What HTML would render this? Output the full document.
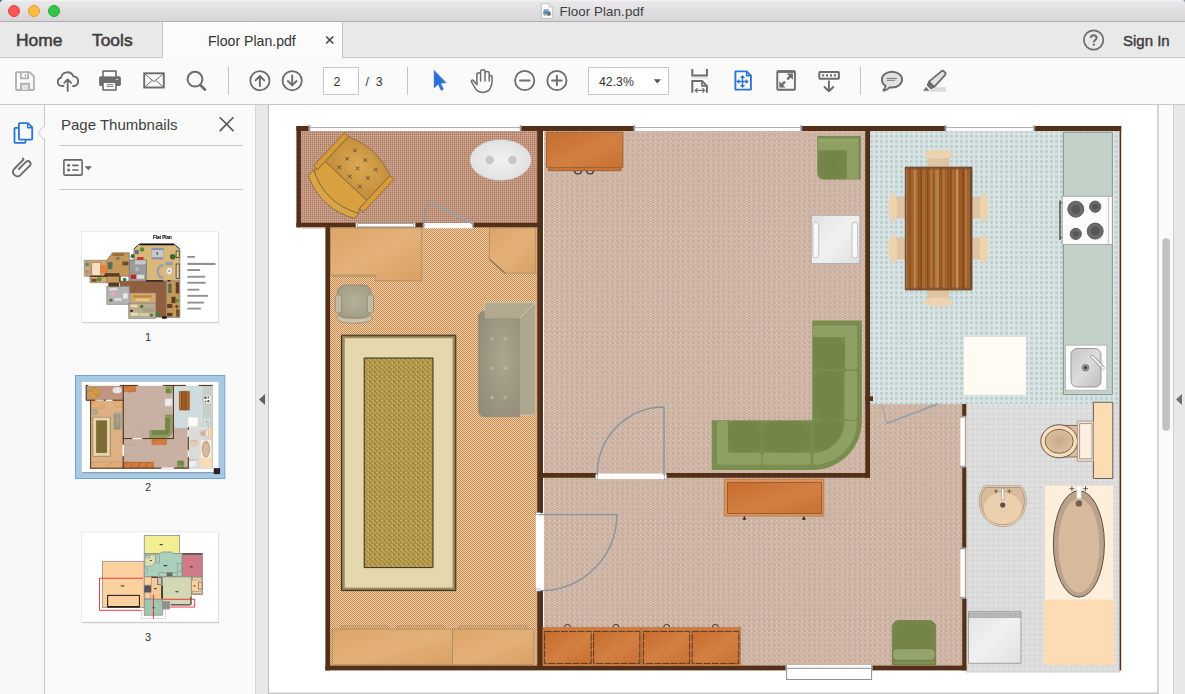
<!DOCTYPE html>
<html>
<head>
<meta charset="utf-8">
<title>Floor Plan.pdf</title>
<style>
html,body{margin:0;padding:0;}
body{width:1185px;height:694px;overflow:hidden;position:relative;background:#fff;font-family:"Liberation Sans",sans-serif;color:#3c3c3c;}
.abs{position:absolute;}
#titlebar{left:0;top:0;width:1185px;height:21px;background:linear-gradient(#f3f3f3 0,#e8e6e8 12%,#d7d5d7 100%);border-bottom:1px solid #b1afb1;}
.tl{position:absolute;top:5px;width:12px;height:12px;border-radius:50%;box-sizing:border-box;}
#title{left:559.5px;top:3.6px;font-size:13.3px;color:#404040;white-space:nowrap;letter-spacing:0.1px;}
#tabbar{left:0;top:22px;width:1185px;height:35px;background:#e9e9e9;border-bottom:1px solid #c6c6c6;}
#tab{left:162px;top:22px;width:179px;height:36px;background:#fbfbfb;border-left:1px solid #c6c6c6;border-right:1px solid #c6c6c6;}
.nav{font-size:17.4px;color:#3e3e3e;top:30px;white-space:nowrap;-webkit-text-stroke:0.55px #3e3e3e;}
#toolbar{left:0;top:58px;width:1185px;height:46px;background:#fafafa;border-bottom:1px solid #c9c9c9;}
.sep{width:1px;height:28px;top:67px;background:#c4c4c4;}
.box{background:#fff;border:1px solid #c8c8c8;box-sizing:border-box;top:67px;height:28px;}
#rail{left:0;top:105px;width:44px;height:589px;background:#f8f8f8;border-right:1px solid #c9c9c9;}
#panel{left:45px;top:105px;width:210px;height:589px;background:#fafafa;}
#strip{left:255px;top:105px;width:12px;height:589px;background:#e8e8e8;border-right:1px solid #bdbdbd;border-left:1px solid #d8d8d8;box-sizing:content-box;}
.hr{height:1px;background:#c9c9c9;left:60px;width:183px;}
.lbl{font-size:11px;color:#333;width:40px;text-align:center;}
</style>
</head>
<body>
<!-- CHROME -->
<div id="titlebar" class="abs"></div>
<div class="tl" style="left:8px;background:#fc5753;border:0.5px solid #df4744;"></div>
<div class="tl" style="left:28px;background:#fdbc40;border:0.5px solid #de9f34;"></div>
<div class="tl" style="left:48px;background:#33c748;border:0.5px solid #27aa35;"></div>
<div id="title" class="abs">Floor Plan.pdf</div>
<div id="tabbar" class="abs"></div>
<div id="tab" class="abs"></div>
<div class="abs nav" style="left:16px;">Home</div>
<div class="abs nav" style="left:92px;">Tools</div>
<div class="abs" style="left:208px;top:33px;font-size:14.1px;color:#333;white-space:nowrap;">Floor Plan.pdf</div>
<div class="abs" style="left:1123px;top:32px;font-size:15px;color:#3e3e3e;white-space:nowrap;-webkit-text-stroke:0.45px #3e3e3e;">Sign In</div>
<div id="toolbar" class="abs"></div>
<div class="abs sep" style="left:228px;"></div>
<div class="abs sep" style="left:407px;"></div>
<div class="abs sep" style="left:860px;"></div>
<div class="abs box" style="left:323px;width:36px;"></div>
<div class="abs" style="left:333.5px;top:74.5px;font-size:12.4px;color:#333;">2</div>
<div class="abs" style="left:365.5px;top:74.5px;font-size:12.4px;color:#333;white-space:pre;">/  3</div>
<div class="abs box" style="left:588px;width:81px;"></div>
<div class="abs" style="left:599px;top:74.5px;font-size:12.3px;color:#333;">42.3%</div>
<!-- LEFT -->
<div id="rail" class="abs"></div>
<div id="panel" class="abs"></div>
<div id="strip" class="abs"></div>
<div class="abs" style="left:61px;top:116px;font-size:15px;color:#404040;white-space:nowrap;">Page Thumbnails</div>
<div class="abs hr" style="top:145px;"></div>
<div class="abs hr" style="top:189px;"></div>
<div class="abs lbl" style="left:128px;top:331px;">1</div>
<div class="abs lbl" style="left:128px;top:481px;">2</div>
<div class="abs lbl" style="left:128px;top:631px;">3</div>
<!-- MAIN SVG (screen coordinates) -->
<svg class="abs" style="left:0;top:0;" width="1185" height="694" viewBox="0 0 1185 694">
<defs>
<pattern id="p1" width="2" height="2" patternUnits="userSpaceOnUse"><rect width="2" height="2" fill="#bf9079"/><rect width="1" height="1" fill="#b07e64"/><rect x="1" y="1" width="1" height="1" fill="#d2ae9c"/></pattern>
<pattern id="p2" width="2" height="2" patternUnits="userSpaceOnUse"><rect width="2" height="2" fill="#ebd0b2"/><rect width="1" height="1" fill="#cd8846"/><rect x="1" y="1" width="1" height="1" fill="#cf8c4a"/></pattern>
<pattern id="p3" width="5.050" height="5.050" x="604.500" y="252.400" patternUnits="userSpaceOnUse"><rect width="5.050" height="5.050" fill="#c4a694"/><g fill="#ebe0d8"><rect x="0" y="0" width="1" height="1"/><rect x="2" y="1" width="1" height="1"/><rect x="4" y="1" width="1" height="1"/><rect x="0" y="3" width="1" height="1"/></g><g fill="#d8c4b7"><rect x="1" y="2" width="1" height="1"/><rect x="3" y="2" width="1" height="1"/><rect x="1" y="4" width="1" height="1"/><rect x="3" y="4" width="1" height="1"/><rect x="1" y="0" width="1" height="1"/><rect x="4" y="3" width="1" height="1"/></g></pattern>
<pattern id="p4" width="5" height="5.040" x="1030" y="190.400" patternUnits="userSpaceOnUse"><rect width="5" height="5.040" fill="#dae3e5"/><rect x="0" y="0" width="3" height="3" fill="#bcd0ce"/></pattern>
<pattern id="p5" width="5.200" height="5.250" x="1024" y="403.900" patternUnits="userSpaceOnUse"><rect width="5.200" height="5.250" fill="#dfe0df"/><rect width="1" height="5.250" fill="#d3d4d3"/><rect width="5.200" height="1" y="4.250" fill="#d3d4d3"/></pattern>
<pattern id="prug" width="4.800" height="4.800" x="364.200" y="358" patternUnits="userSpaceOnUse"><rect width="4.800" height="4.800" fill="#d3b053"/><path d="M0 .6h2.400v1.200M2.400 3h2.400M.6 2.400v2.400M3 2.400v-1.200h1.200M1.800 3v1.200h-1.200" stroke="#84753f" stroke-width=".85" fill="none"/></pattern>
<linearGradient id="gshelf" x1="0" y1="0" x2="1" y2="1"><stop offset="0" stop-color="#dda468"/><stop offset=".5" stop-color="#e3b178"/><stop offset="1" stop-color="#daa064"/></linearGradient>
<linearGradient id="gor" x1="0" y1="0" x2="1" y2="1"><stop offset="0" stop-color="#c66c2e"/><stop offset=".55" stop-color="#d28042"/><stop offset="1" stop-color="#c77032"/></linearGradient>
<radialGradient id="garm" cx=".5" cy=".5" r=".6"><stop offset="0" stop-color="#dcaa52"/><stop offset="1" stop-color="#c48f3e"/></radialGradient>
<radialGradient id="ggray" cx=".5" cy=".5" r=".6"><stop offset="0" stop-color="#b5b099"/><stop offset="1" stop-color="#a09c86"/></radialGradient>
<radialGradient id="gsofa" cx=".6" cy=".45" r=".7"><stop offset="0" stop-color="#aca68c"/><stop offset="1" stop-color="#918c79"/></radialGradient>
<radialGradient id="ggreen" cx=".5" cy=".5" r=".75"><stop offset="0" stop-color="#728544"/><stop offset=".7" stop-color="#74874a"/><stop offset="1" stop-color="#7c8e50"/></radialGradient>
<linearGradient id="gwhite" x1="0" y1="0" x2="1" y2="1"><stop offset="0" stop-color="#e2e2e2"/><stop offset=".5" stop-color="#f1f1f1"/><stop offset="1" stop-color="#e0e0e0"/></linearGradient>
<linearGradient id="gwood" x1="0" y1="0" x2="1" y2="0">
<stop offset="0" stop-color="#8a4a1e"/><stop offset=".04" stop-color="#b87a3c"/><stop offset=".08" stop-color="#9a5a26"/><stop offset=".13" stop-color="#c48a48"/><stop offset=".18" stop-color="#a46430"/><stop offset=".23" stop-color="#8c4c20"/><stop offset=".28" stop-color="#b67838"/><stop offset=".33" stop-color="#9a5828"/><stop offset=".38" stop-color="#c08444"/><stop offset=".43" stop-color="#a4622c"/><stop offset=".48" stop-color="#caa058"/><stop offset=".52" stop-color="#9c5a28"/><stop offset=".57" stop-color="#b87a3c"/><stop offset=".62" stop-color="#8e4e22"/><stop offset=".67" stop-color="#b07034"/><stop offset=".72" stop-color="#9a5828"/><stop offset=".77" stop-color="#c48c4a"/><stop offset=".82" stop-color="#a05e2a"/><stop offset=".87" stop-color="#8a4a1e"/><stop offset=".92" stop-color="#b47636"/><stop offset=".96" stop-color="#96562a"/><stop offset="1" stop-color="#7e4218"/></linearGradient>
<radialGradient id="gtub" cx=".5" cy=".5" r=".5"><stop offset="0" stop-color="#d8bc9c"/><stop offset=".78" stop-color="#d6b898"/><stop offset=".8" stop-color="#bca488"/><stop offset="1" stop-color="#b89e84"/></radialGradient>
<radialGradient id="gbowl" cx=".5" cy=".5" r=".5"><stop offset="0" stop-color="#c8a888"/><stop offset="1" stop-color="#dcc0a0"/></radialGradient>
<linearGradient id="gsink" x1="0" y1="0" x2="1" y2="1"><stop offset="0" stop-color="#c4c4c4"/><stop offset=".5" stop-color="#dcdcdc"/><stop offset="1" stop-color="#bcbcbc"/></linearGradient>
<radialGradient id="goval" cx=".5" cy=".5" r=".6"><stop offset="0" stop-color="#f2f2f2"/><stop offset="1" stop-color="#dedede"/></radialGradient>
<filter id="blur1" x="-5%" y="-5%" width="110%" height="110%"><feGaussianBlur stdDeviation=".45"/></filter>
<filter id="blur2" x="-5%" y="-5%" width="110%" height="110%"><feGaussianBlur stdDeviation=".3"/></filter>
</defs>
<g id="icons" fill="none" stroke="#6c6c6c" stroke-width="1.8" stroke-linecap="round" stroke-linejoin="round">
<!-- title doc icon -->
<g stroke="none">
<path d="M541.7 3.6h7.2l3.600 3.700v11h-10.800z" fill="#fdfdfd" stroke="#b8b8b8" stroke-width="0.7"/>
<path d="M548.900 3.600v3.700h3.600z" fill="#e4e4e4" stroke="#b8b8b8" stroke-width="0.500"/>
<rect x="543.600" y="9.300" width="5" height="2" fill="#6a9ad8"/>
<rect x="543.300" y="11.400" width="7" height="2.400" fill="#4a6fa8"/>
<circle cx="548.900" cy="14" r="2.100" fill="#777"/>
<circle cx="545" cy="14.200" r="1.500" fill="#8aa"/>
</g>
<!-- tab close -->
<path d="M326.200 36.500l7 7M333.200 36.500l-7 7" stroke="#4a4a4a" stroke-width="1.700" stroke-linecap="butt"/>
<!-- help -->
<circle cx="1093.600" cy="40" r="9.700" stroke-width="1.700"/>
<path d="M1090.800 38c0-1.800 1.300-2.800 2.900-2.800c1.700 0 2.900 1 2.900 2.500c0 2.100-2.800 2.300-2.800 4.500" stroke-width="2" stroke-linecap="butt"/>
<circle cx="1093.800" cy="44.700" r="1.150" fill="#6c6c6c" stroke="none"/>
<!-- save (disabled) -->
<g stroke="#b2b2b2" stroke-width="1.900" stroke-linejoin="miter">
<path d="M16.800 72.100h12.900l4.200 4.200v12.900a.8.8 0 0 1-.8.800h-16.300a.8.8 0 0 1-.8-.8v-16.300a.8.8 0 0 1 .8-.8z"/>
<path d="M20.900 72.200v6.200h7.200v-6.200"/>
<path d="M25.300 74.200v2.600" stroke-width="1.100"/>
<path d="M20.900 89.800v-6h8.200v6" fill="#e4e4e4"/>
</g>
<!-- cloud upload -->
<path d="M63.500 86h-1.500a4.200 4.200 0 0 1-.9-8.300a6.400 6.400 0 0 1 12.300-1.300a4.900 4.900 0 0 1 1.200 9.600h-1.600" stroke-width="1.900"/>
<path d="M67.700 91v-11.200M64.200 82.900l3.500-3.600l3.500 3.600" stroke-width="1.800"/>
<!-- printer -->
<g stroke="none" fill="#6c6c6c">
<rect x="99.100" y="76.300" width="21.800" height="9.600" rx="1.600"/>
<rect x="102.200" y="70.300" width="14.600" height="7" rx=".8"/>
<rect x="103.800" y="71.900" width="11.400" height="4.500" fill="#fafafa"/>
<rect x="102.200" y="81.600" width="14.600" height="9.200" rx=".8"/>
<rect x="103.800" y="83" width="11.400" height="6.200" fill="#fafafa"/>
<rect x="106.700" y="84.200" width="6.600" height=".9"/>
<rect x="106.700" y="86" width="6.600" height=".9"/>
<rect x="116.200" y="79.100" width="1.800" height=".9" fill="#fafafa"/>
</g>
<!-- mail -->
<rect x="144.200" y="73.300" width="19.600" height="14.200" stroke-width="1.900" stroke-linejoin="miter"/>
<path d="M144.500 73.600l9.500 8l9.500-8M144.500 87.200l7.300-6.400M163.500 87.200l-7.300-6.400" stroke-width="1"/>
<!-- search -->
<circle cx="195" cy="79.200" r="7.400" stroke-width="2"/>
<path d="M200.500 85.200l4.600 4.500" stroke-width="2.600"/>
<!-- up / down -->
<circle cx="259.900" cy="80.700" r="9.600" stroke-width="1.800"/>
<path d="M259.900 86v-9.600M255.600 80.400l4.300-4.400l4.300 4.400" stroke-width="1.900"/>
<circle cx="292.200" cy="80.700" r="9.600" stroke-width="1.800"/>
<path d="M292.200 75.400v9.600M287.900 81l4.300 4.400l4.300-4.400" stroke-width="1.900"/>
<!-- cursor -->
<path d="M434.100 70.600v17.300l4.100-3.700l3 6.200l2.300-1.100l-2.900-6.100l5.400-.4z" fill="#2a6fd2" stroke="#2a6fd2" stroke-width=".5"/>
<!-- hand -->
<path d="M476.900 84.600c-1.600-1.900-2.700-3.400-3.700-4.200c-1.100-.9-2.300.2-1.600 1.500c1.300 2.500 3.200 6.300 4.900 8.100c1.500 1.600 3.400 2.400 6.100 2.400c3.500 0 6.300-1.400 7.700-4.200c1-2 1.800-5.300 1.800-7.800v-3.600c0-1.900-2.900-1.900-2.900 0v4.200M476.900 84.600v-10.100c0-2.400 3.700-2.400 3.700 0v6.500M480.600 81v-9.500c0-2.400 4.400-2.400 4.400 0v9.500M485 81v-7.600c0-2.400 4.200-2.400 4.200 0v7.600" stroke-width="1.500"/>
<!-- zoom out / in -->
<circle cx="524.700" cy="80.500" r="9.600" stroke-width="1.800"/>
<path d="M520 80.500h9.600" stroke-width="1.900"/>
<circle cx="556.900" cy="80.500" r="9.600" stroke-width="1.800"/>
<path d="M552.100 80.500h9.600M556.900 75.700v9.600" stroke-width="1.900"/>
<!-- dropdown triangle -->
<path d="M653.800 79.300h7.200l-3.600 4.200z" fill="#555" stroke="none"/>
<!-- fit width -->
<g stroke-linecap="butt" stroke-linejoin="miter" stroke-width="2">
<path d="M692.300 69v6.400h14.600v-6.400"/>
<path d="M690.800 78h17.600" stroke="#dcdcdc" stroke-width="1"/>
<path d="M692.300 92.700v-11.800h9.700l4.900 4.900v6.900"/>
<path d="M702 80.900v4.900h4.900" stroke-width="1.700"/>
<path d="M695.200 90.400h9.400M697.400 88.200l-2.200 2.200l2.200 2.200M702.400 88.200l2.200 2.200l-2.200 2.200" stroke-width="1.200"/>
</g>
<!-- fit page (blue) -->
<g stroke="#2a74d8" stroke-linejoin="miter">
<path d="M735.400 71.400h11.200l4.300 4.300v13.900h-15.500z" stroke-width="1.900" stroke-linejoin="round"/>
<path d="M746.600 71.400v4.300h4.300" stroke-width="1.500"/>
<path d="M738 81.500h9M742.500 77v9" stroke-width="1.400"/>
<path d="M742.500 74.900l2.600 3.100h-5.200zM742.500 88.100l2.600-3.100h-5.200zM736.200 81.500l3.100-2.500v5zM748.800 81.500l-3.100-2.500v5z" fill="#2a74d8" stroke="none"/>
</g>
<!-- fullscreen -->
<rect x="777.300" y="71.100" width="17.600" height="18.600" rx=".8" stroke-width="1.900"/>
<path d="M777.300 71.700h17.600" stroke-width="2.400" stroke-linecap="butt"/>
<path d="M790.600 76l-3.400 3.400M781.600 85l3.400-3.400" stroke-width="2.300" stroke-linecap="butt"/>
<path d="M792.900 73.600v6.200l-6.200-6.200zM779.300 87.400v-6.200l6.200 6.200z" fill="#6c6c6c" stroke="none"/>
<!-- keyboard down -->
<rect x="819.300" y="72.100" width="19.600" height="6.600" rx=".8" stroke-width="2"/>
<path d="M822.200 75.400h14.400" stroke-width="2.200" stroke-dasharray="2 1.900" stroke-linecap="butt"/>
<path d="M828.900 81.300v9.600M824.500 87l4.400 4.300l4.400-4.300" stroke-width="1.900"/>
<!-- comment -->
<path d="M892 71.700c5.600 0 10.100 3.500 10.100 7.900s-4.500 7.900-10.100 7.900c-.8 0-1.500-.1-2.300-.2c-1.700 1.700-3.500 2.900-5.600 3.400c-.5.100-.8-.4-.5-.8c1-1.200 1.800-2.600 2-4c-2.300-1.400-3.700-3.700-3.700-6.300c0-4.400 4.500-7.900 10.100-7.900z" fill="#e2e2e2" stroke-width="1.900"/>
<path d="M886.700 78.400h10.300M886.700 80.300h8.300" stroke-width=".9" stroke-linecap="butt"/>
<!-- highlighter -->
<rect x="930" y="87.200" width="16" height="4.500" fill="#dcdcdc" stroke="none"/>
<path d="M941 71.600c1-1 2.200-1 3.200 0l.6.600c1 1 1 2.200 0 3.200l-10.400 11.200l-3.600 1.600l-3-3l1.400-3.800z" fill="#e2e2e2" stroke-width="1.800"/>
<path d="M929.400 81.400l5.200 5.200l-3.800 1.700l-3.100-3.100z" fill="#6c6c6c" stroke-width="1"/>
<path d="M926.300 87.400l2.600 3.200h-5.100z" fill="#6c6c6c" stroke-width=".6"/>
<!-- panel icons -->
<!-- pages icon blue -->
<g stroke="#2a74d8" stroke-width="1.800" stroke-linejoin="round">
<path d="M18.700 127.900h-3.300a.9.900 0 0 0-.9.900v13.200a.9.900 0 0 0 .9.900h9.200a.9.900 0 0 0 .9-.9v-1.800"/>
<path d="M19.800 123.200h8.200l4.200 4.200v11.400a.9.900 0 0 1-.9.900h-11.500a.9.900 0 0 1-.9-.9v-14.700a.9.900 0 0 1 .9-.9z" fill="#f8f8f8"/>
<path d="M27.600 123.600v4.200h4.200" stroke-width="1.400"/>
</g>
<!-- paperclip -->
<path d="M18.600 167.700l7.300-7.300a2.700 2.700 0 0 1 3.800 3.800l-9.700 9.700a4.400 4.400 0 0 1-6.200-6.200l9.500-9.500" stroke-width="1.800" transform="translate(0.300,1.300)"/>
<path d="M22.800 158.500a0 0 0 0 1 0 0" />
<!-- panel close X -->
<path d="M219.700 117.300l13.800 13.800M233.500 117.300l-13.800 13.800" stroke="#555" stroke-width="1.600" stroke-linecap="butt"/>
<!-- options list icon -->
<rect x="63.900" y="159.900" width="18.200" height="15.200" rx="1" stroke-width="1.600" stroke="#666"/>
<circle cx="68.600" cy="165.300" r="1.500" fill="#666" stroke="none"/>
<circle cx="68.600" cy="170" r="1.500" fill="#666" stroke="none"/>
<path d="M72.200 165.300h6.300M72.200 170h6.300" stroke-width="1.700" stroke="#666" stroke-linecap="butt"/>
<path d="M84.700 166.300h7.200l-3.600 4z" fill="#666" stroke="none"/>
</g>

<g id="plan">
<!-- floors -->
<rect x="301" y="131" width="236.500" height="92" fill="url(#p1)"/>
<rect x="330" y="227" width="207.500" height="439" fill="url(#p2)"/>
<rect x="544" y="131" width="321.500" height="342.500" fill="url(#p3)"/>
<rect x="544" y="477.500" width="418.500" height="188.500" fill="url(#p3)"/>
<rect x="870" y="403" width="92.500" height="75" fill="url(#p3)"/>
<rect x="870" y="131" width="250" height="273" fill="url(#p4)"/>
<rect x="966" y="404" width="154" height="268.700" fill="url(#p5)"/>
<rect x="302" y="227.300" width="23.400" height="1.600" fill="#e8d2c9"/>
<!-- walls -->
<g fill="#553018">
<rect x="296.400" y="126" width="12.600" height="5"/>
<rect x="520.400" y="126" width="113.600" height="5"/>
<rect x="801" y="126" width="144.200" height="5"/>
<rect x="1034" y="126" width="87.200" height="5"/>
<rect x="296.400" y="126.100" width="4.600" height="101.200"/>
<rect x="296.400" y="222.800" width="60.400" height="4.500"/>
<rect x="414.400" y="222.800" width="9.600" height="4.500"/>
<rect x="473" y="222.800" width="70" height="4.500"/>
<rect x="325.400" y="227" width="4.700" height="443.400"/>
<rect x="325.400" y="665.600" width="460.400" height="4.800"/>
<rect x="872" y="665.600" width="94.400" height="4.800"/>
<rect x="537.200" y="126.100" width="5.800" height="387"/>
<rect x="537.200" y="591" width="5.800" height="79"/>
<rect x="543" y="473" width="53.500" height="4.800"/>
<rect x="666" y="473" width="204" height="4.800"/>
<rect x="865.200" y="126.100" width="4.800" height="351.700"/>
<rect x="865.200" y="396.300" width="7.800" height="4.700"/>
<rect x="1119.600" y="126.100" width="1.600" height="544.300"/>
<rect x="962.200" y="404" width="4.100" height="12.800"/>
<rect x="962.200" y="467" width="4.100" height="81.500"/>
<rect x="962.200" y="598" width="4.300" height="72.400"/>
</g>
<!-- windows -->
<g fill="#fff" stroke="#8a9094" stroke-width="1">
<path d="M309 127.500h211.400" fill="none"/><rect x="309" y="127.700" width="211.400" height="3.300" stroke="none"/>
<rect x="308.300" y="125.300" width="1.900" height="5.700" fill="#8e969c" stroke="none"/><rect x="519.700" y="125.300" width="1.900" height="5.700" fill="#8e969c" stroke="none"/>
<path d="M634 127.500h167" fill="none"/><rect x="634" y="127.700" width="167" height="3.300" stroke="none"/>
<rect x="633.200" y="125.300" width="1.900" height="5.700" fill="#8e969c" stroke="none"/><rect x="800.300" y="125.300" width="1.900" height="5.700" fill="#8e969c" stroke="none"/>
<path d="M945.200 127.500h89" fill="none"/><rect x="945.200" y="127.700" width="89" height="3.300" stroke="none"/>
<rect x="944.500" y="125.300" width="1.900" height="5.700" fill="#8e969c" stroke="none"/><rect x="1033.300" y="125.300" width="1.900" height="5.700" fill="#8e969c" stroke="none"/>
<!-- window in room1 bottom wall -->
<rect x="356.800" y="223.300" width="57.400" height="3.600" stroke-width=".9"/>
<rect x="413.400" y="222.600" width="1.800" height="5" stroke-width=".6"/>
<rect x="355.900" y="222.600" width="1.800" height="5" stroke-width=".6"/>
<!-- door room1/room2 -->
<rect x="424" y="223.400" width="49" height="4.800" stroke="none"/>
<path d="M423.400 228c.3-11 2-20.500 5.900-26.600" fill="none" stroke="#8c959c" stroke-width="1"/><path d="M429.300 201.400l43.800 22.600" fill="none" stroke="#98a2aa" stroke-width="1.900"/>
<rect x="471.800" y="222.600" width="2" height="4.500" fill="#9aa0a4" stroke="none"/><rect x="422.600" y="223.400" width="2" height="4" fill="#9aa0a4" stroke="none"/>
<!-- door in horizontal wall -->
<rect x="596.500" y="474.600" width="69.500" height="4.500" stroke="none"/>
<path d="M597.200 475c0-37.500 29.500-67.800 66.800-68v68" fill="none" stroke="#8a939a" stroke-width="1.400"/>
<rect x="595.600" y="474.400" width="2.200" height="4.800" stroke-width=".6"/><rect x="664.600" y="474.400" width="2.200" height="4.800" stroke-width=".6"/>
<!-- left door of hall -->
<rect x="535.800" y="513" width="5.500" height="78" stroke="none"/>
<path d="M538 514.600h78.800c0 42-33.700 75.800-76 76" fill="none" stroke="#8a939a" stroke-width="1.400"/>
<rect x="535.600" y="512.400" width="4.500" height="2.200" stroke-width=".6"/><rect x="535.600" y="588.900" width="4.500" height="2.200" stroke-width=".6"/>
<!-- kitchen door swing -->
<path d="M881.800 404.200l5 19.200" fill="none" stroke="#98a0a6" stroke-width="1"/><path d="M886.800 423.400l51.400-19.600" fill="none" stroke="#9aa2a8" stroke-width="1.900"/>
<!-- bath windows -->
<rect x="960.400" y="417" width="5.200" height="50" stroke="none"/>
<path d="M965.400 417v50" fill="none" stroke="#9a6e50" stroke-width=".8"/>
<rect x="960" y="415.800" width="6" height="1.800" fill="#9aa0a4" stroke="none"/><rect x="960" y="465.800" width="6" height="1.800" fill="#9aa0a4" stroke="none"/>
<rect x="960.400" y="548.400" width="5.200" height="50" stroke="none"/>
<path d="M965.400 548.400v50" fill="none" stroke="#9a6e50" stroke-width=".8"/>
<rect x="960" y="547.400" width="6" height="1.800" fill="#9aa0a4" stroke="none"/><rect x="960" y="596.800" width="6" height="1.800" fill="#9aa0a4" stroke="none"/>
<!-- bottom window -->
<rect x="786" y="665" width="86" height="5.500" stroke="none"/>
<rect x="786.600" y="668.300" width="85" height="11.200" stroke-width="1"/>
<rect x="785.400" y="664.600" width="1.600" height="5" fill="#9aa0a4" stroke="none"/><rect x="871.200" y="664.600" width="1.600" height="5" fill="#9aa0a4" stroke="none"/>
</g>
<g id="furn" stroke-linejoin="round">
<!-- ===== room 1 ===== -->
<g transform="translate(346,180.900) rotate(43)" stroke="#80683a" stroke-width=".8">
<path d="M-31,14 Q0,31 31.500,15 L32,21.500 Q1,38 -31.500,21.800 Z" fill="#dba444"/>
<path d="M-28.500,0 L28.500,0 L28.500,11 L31.500,15 Q0,31 -31,14 L-28.500,11 Z" fill="#d9a040"/>
<path d="M-28.500,-34 Q0,-46 28.500,-34 L28.500,0 L-28.500,0 Z" fill="url(#garm)"/>
<rect x="-34" y="-34" width="5.500" height="45" fill="#d89b36"/>
<rect x="28.500" y="-34" width="5.500" height="45" fill="#d89b36"/>
</g>
<path d="M353.1 148.6l3.600 3.600m0-3.600l-3.600 3.600M345.4 157.0l3.600 3.600m0-3.600l-3.600 3.600M363.5 158.3l3.600 3.600m0-3.600l-3.600 3.600M337.5 165.5l3.600 3.600m0-3.600l-3.600 3.600M355.8 166.6l3.600 3.600m0-3.600l-3.600 3.600M373.8 167.9l3.600 3.600m0-3.600l-3.600 3.600M347.9 174.7l3.600 3.600m0-3.600l-3.600 3.600M366.0 176.3l3.600 3.600m0-3.600l-3.600 3.600M358.2 184.7l3.600 3.600m0-3.600l-3.600 3.600" stroke="#574636" stroke-width=".95" fill="none"/>
<ellipse cx="500.600" cy="160" rx="30.400" ry="20.200" fill="url(#goval)" stroke="#cfcfcf" stroke-width=".6"/>
<circle cx="489.700" cy="160" r="4.200" fill="#c6c6c6"/><circle cx="512.500" cy="160" r="4.200" fill="#c6c6c6"/>
<!-- ===== room 2 ===== -->
<g stroke="#a08a6c" stroke-width=".7">
<path d="M330.500 228h91.100v52.800h-46v-5.600h-45.100z" fill="url(#gshelf)"/>
<path d="M332.500 275.200h41.500v1.600h-41.500z" fill="#d9a468" stroke-width=".5"/>
<path d="M489.500 228h46.100v45.200h-30.400l-15.700-14z" fill="url(#gshelf)"/>
<path d="M489.500 259.200l15.700 14" stroke="#8a7860" stroke-width="1.300" fill="none"/>
<!-- bottom cabinets -->
<rect x="341.400" y="626" width="46.300" height="3.400" fill="#dda86c" stroke-width=".7"/>
<rect x="397.300" y="626" width="46.400" height="3.400" fill="#dda86c" stroke-width=".7"/>
<rect x="459.100" y="626" width="67.600" height="3.400" fill="#dda86c" stroke-width=".7"/>
<rect x="332.300" y="629.100" width="120.200" height="35.500" fill="url(#gshelf)"/>
<rect x="452.500" y="629.100" width="81.300" height="35.500" fill="url(#gshelf)"/>
</g>
<!-- office chair -->
<g stroke="#88846e" stroke-width=".7">
<path d="M338.400 315.600c4.500 4 27.500 4 32 0c2.200 1.200 2 4 -.5 5.200c-6.500 3.200 -24.500 3.200 -31 0c-2.500 -1.200 -2.700 -4 -.5 -5.200z" fill="#c9c4ab"/>
<rect x="337.400" y="285" width="33.700" height="32.300" rx="8" fill="url(#ggray)"/>
<rect x="335.200" y="294.500" width="6.300" height="18.700" rx="3" fill="#c0bba2"/>
<rect x="367.300" y="294.500" width="6.200" height="18.700" rx="3" fill="#c0bba2"/>
</g>
<!-- gray sofa -->
<g stroke="#cfcab8" stroke-width=".7">
<path d="M484.600 302.500h51l-15.900 15.900h-35.100z" fill="#b1aa91"/>
<path d="M535.600 302.500v112.500h-15.900v-96.600z" fill="#aea78e"/>
<path d="M484.600 311c-3.500 0-6.200 2.700-6.200 6v93.500c0 3.500 2.700 6.200 6.200 6.200h35.100v-98.300h-35.100z" fill="url(#gsofa)" stroke="#8e8a78" stroke-width=".6"/>
<path d="M490.100 338.700h4m-2-2v4M503.300 338.700h4m-2-2v4M490.100 368.100h4m-2-2v4M503.300 368.100h4m-2-2v4M490.100 397.600h4m-2-2v4M503.300 397.600h4m-2-2v4" stroke="#cbc7b6" stroke-width=".7" fill="none"/>
</g>
<!-- rug -->
<rect x="341.400" y="335.200" width="114.400" height="255.400" fill="#857648" stroke="#35321f" stroke-width="1"/>
<rect x="343" y="336.800" width="111.200" height="252.200" fill="#9a8e68"/>
<rect x="344.800" y="338.200" width="107.800" height="249.400" fill="#e6d7ad"/>
<rect x="364.200" y="358" width="68.800" height="209.600" fill="url(#prug)" stroke="#33301e" stroke-width="1"/>
<!-- ===== living room ===== -->
<g stroke="#96603a" stroke-width=".9">
<rect x="548.500" y="167" width="72.500" height="3.700" fill="#d0742e"/><path d="M584.600 167.400v3.300" stroke-width=".7"/>
<rect x="546.500" y="132.200" width="76.400" height="35.400" fill="url(#gor)"/>
<path d="M574.600 170.800a3.400 3.200 0 0 0 6.800 0M586.600 170.800a3.400 3.200 0 0 0 6.800 0" fill="none" stroke="#2a2a2a" stroke-width="1.200"/>
</g>
<!-- green corner chair -->
<path d="M817.200 136.100h43.700v43.500h-37.700a6 6 0 0 1-6-6z" fill="#7b8d4e"/>
<path d="M818 150.200h29v29h-23a6 6 0 0 1-6-6z" fill="url(#ggreen)"/>
<path d="M818 138.600h40.500v40.200h-11.500v-28.600h-29z" fill="#8fa065"/>
<path d="M818.400 139.200h39.600v3h-39.600z" fill="#9aa972" opacity=".6"/>
<!-- white small table -->
<rect x="811.300" y="215.300" width="48.500" height="48.200" fill="url(#gwhite)" stroke="#aeaeae" stroke-width=".9"/>
<rect x="813" y="222" width="5.700" height="36.200" rx="2.800" fill="#f8f8f8" stroke="#b4b4b4" stroke-width=".8"/>
<rect x="852" y="222" width="5.700" height="36.200" rx="2.800" fill="#f8f8f8" stroke="#b4b4b4" stroke-width=".8"/>
<!-- L sofa -->
<path d="M812.200 320.600h49.600v100.400a48.900 48.900 0 0 1-48.900 48.900h-101.200v-49.600h100.500z" fill="#7b8d4e"/>
<g fill="url(#ggreen)">
<rect x="812.900" y="336.900" width="32.200" height="32.700" rx="4"/>
<rect x="812.900" y="370.800" width="31.500" height="49.100" rx="5"/>
<path d="M812.900 421h31.500c0 17.500-14 31.800-31.500 31.800z"/>
<rect x="762.600" y="421" width="48.400" height="31.800" rx="5"/>
<rect x="728" y="421" width="33.500" height="31.800" rx="5"/>
</g>
<g fill="#8fa065">
<path d="M812.900 328.400a3 3 0 0 1 3-3h38.200a3 3 0 0 1 3 3v38.200a3 3 0 0 1-3 3h-6a3 3 0 0 1-3-3v-29.700h-29.200a3 3 0 0 1-3-3z"/>
<rect x="844.400" y="370.800" width="12.700" height="49.100" rx="4"/>
<path d="M844.400 421h12.700c0 24.200-19.600 43.800-43.800 43.800v-12c17.200 0 31.100-14.200 31.100-31.800z"/>
<rect x="762.600" y="452.800" width="48.400" height="12" rx="4"/>
<path d="M717 424a3 3 0 0 1 3-3h5a3 3 0 0 1 3 3v28.800h30.500a3 3 0 0 1 3 3v6a3 3 0 0 1-3 3h-38.500a3 3 0 0 1-3-3z"/>
</g>
<!-- TV cabinet -->
<rect x="724.400" y="479.100" width="99.300" height="37" fill="#dc935c" stroke="#b4743e" stroke-width=".7"/>
<rect x="727.500" y="482.400" width="94.100" height="31.100" fill="url(#gor)" stroke="#8c5226" stroke-width=".8"/>
<path d="M742.900 519.400l1.500-3l1.500 3zM802.400 519.400l1.500-3l1.500 3z" fill="#222" stroke="#222" stroke-width=".5"/>
<!-- hall orange cabinets -->
<rect x="542.800" y="627.400" width="197.800" height="38" fill="#d07a3c" stroke="#b4743e" stroke-width=".6"/>
<g fill="url(#gor)" stroke="#3a2a1e" stroke-width=".8" stroke-dasharray="7 1.200">
<rect x="544.600" y="631.400" width="46.600" height="32"/>
<rect x="593.600" y="631.400" width="46.200" height="32"/>
<rect x="643.400" y="631.400" width="46.200" height="32"/>
<rect x="692.200" y="631.400" width="46.600" height="32"/>
</g>
<path d="M641.500 627.400v38" stroke="#b06a34" stroke-width=".8"/>
<path d="M564.500 627.200a3 2.800 0 0 1 6 0M613 627.200a3 2.800 0 0 1 6 0M663.700 627.200a3 2.800 0 0 1 6 0M712.300 627.200a3 2.800 0 0 1 6 0" fill="none" stroke="#2a2a2a" stroke-width=".9"/>
<!-- green chair bottom -->
<path d="M892.300 627a6.500 6.500 0 0 1 6.500-6.500h30.400a6.500 6.500 0 0 1 6.500 6.500v37.600h-43.400z" fill="url(#ggreen)" stroke="#66763e" stroke-width=".6"/>
<rect x="892.700" y="648.800" width="42.600" height="11.600" rx="4.500" fill="#94a46a" stroke="#66763e" stroke-width=".6"/>
<rect x="892.700" y="660.400" width="42.600" height="4.200" fill="#7d8f50" stroke="#66763e" stroke-width=".5"/>
<!-- ===== kitchen ===== -->
<!-- chairs -->
<g fill="#dfc4a2">
<rect x="927.400" y="156" width="21.900" height="12" rx="2"/>
<rect x="927.400" y="289" width="21.900" height="11" rx="2"/>
<rect x="896" y="196.700" width="10" height="21.900" rx="2"/><rect x="896" y="237.800" width="10" height="21.900" rx="2"/>
<rect x="971" y="196.700" width="10" height="21.900" rx="2"/><rect x="971" y="237.800" width="10" height="21.900" rx="2"/>
</g>
<g fill="#eed3af">
<ellipse cx="938.350" cy="154.400" rx="14.300" ry="4.700"/>
<ellipse cx="938.350" cy="302" rx="14.300" ry="4.700"/>
<ellipse cx="892.900" cy="207.650" rx="4.500" ry="14.300"/><ellipse cx="892.900" cy="248.750" rx="4.500" ry="14.300"/>
<ellipse cx="984" cy="207.650" rx="4.500" ry="14.300"/><ellipse cx="984" cy="248.750" rx="4.500" ry="14.300"/>
</g>
<!-- table -->
<rect x="905.300" y="167.200" width="66.600" height="122.700" fill="url(#gwood)" stroke="#4e3a2a" stroke-width=".9"/>
<!--grain--><g><rect x="905.8" y="167.7" width="0.8" height="121.7" fill="#c89250" opacity="0.80"/><rect x="906.6" y="167.7" width="0.5" height="121.7" fill="#c08444" opacity="0.35"/><rect x="907.7" y="167.7" width="1.2" height="121.7" fill="#7a3f16" opacity="0.50"/><rect x="908.9" y="167.7" width="0.5" height="121.7" fill="#a4622c" opacity="0.80"/><rect x="909.4" y="167.7" width="0.6" height="121.7" fill="#8a4a1e" opacity="0.80"/><rect x="910.0" y="167.7" width="1.2" height="121.7" fill="#8a4a1e" opacity="0.50"/><rect x="912.6" y="167.7" width="0.5" height="121.7" fill="#7e4218" opacity="0.80"/><rect x="913.1" y="167.7" width="0.6" height="121.7" fill="#7a3f16" opacity="0.50"/><rect x="914.3" y="167.7" width="1.0" height="121.7" fill="#c89250" opacity="0.35"/><rect x="916.7" y="167.7" width="0.8" height="121.7" fill="#c08444" opacity="0.50"/><rect x="917.5" y="167.7" width="1.2" height="121.7" fill="#7e4218" opacity="0.50"/><rect x="919.3" y="167.7" width="0.5" height="121.7" fill="#c08444" opacity="0.35"/><rect x="921.2" y="167.7" width="0.5" height="121.7" fill="#7e4218" opacity="0.50"/><rect x="922.7" y="167.7" width="1.2" height="121.7" fill="#a4622c" opacity="0.65"/><rect x="924.9" y="167.7" width="1.2" height="121.7" fill="#92521f" opacity="0.65"/><rect x="926.7" y="167.7" width="0.6" height="121.7" fill="#c89250" opacity="0.50"/><rect x="927.3" y="167.7" width="1.2" height="121.7" fill="#6e3812" opacity="0.80"/><rect x="929.1" y="167.7" width="1.0" height="121.7" fill="#6e3812" opacity="0.35"/><rect x="930.1" y="167.7" width="1.2" height="121.7" fill="#a4622c" opacity="0.50"/><rect x="931.9" y="167.7" width="0.6" height="121.7" fill="#92521f" opacity="0.80"/><rect x="932.5" y="167.7" width="0.5" height="121.7" fill="#c08444" opacity="0.65"/><rect x="933.6" y="167.7" width="0.8" height="121.7" fill="#7e4218" opacity="0.80"/><rect x="935.8" y="167.7" width="1.0" height="121.7" fill="#8a4a1e" opacity="0.35"/><rect x="937.4" y="167.7" width="1.0" height="121.7" fill="#8a4a1e" opacity="0.35"/><rect x="939.0" y="167.7" width="1.2" height="121.7" fill="#92521f" opacity="0.65"/><rect x="941.2" y="167.7" width="0.8" height="121.7" fill="#7a3f16" opacity="0.80"/><rect x="942.6" y="167.7" width="0.6" height="121.7" fill="#7e4218" opacity="0.35"/><rect x="944.2" y="167.7" width="0.5" height="121.7" fill="#b67838" opacity="0.65"/><rect x="945.0" y="167.7" width="0.6" height="121.7" fill="#a4622c" opacity="0.80"/><rect x="946.6" y="167.7" width="0.5" height="121.7" fill="#c89250" opacity="0.80"/><rect x="948.1" y="167.7" width="1.2" height="121.7" fill="#6e3812" opacity="0.50"/><rect x="950.3" y="167.7" width="1.2" height="121.7" fill="#6e3812" opacity="0.80"/><rect x="952.1" y="167.7" width="1.0" height="121.7" fill="#b67838" opacity="0.50"/><rect x="953.1" y="167.7" width="0.6" height="121.7" fill="#c89250" opacity="0.50"/><rect x="954.0" y="167.7" width="0.5" height="121.7" fill="#92521f" opacity="0.50"/><rect x="955.1" y="167.7" width="0.8" height="121.7" fill="#7a3f16" opacity="0.50"/><rect x="956.9" y="167.7" width="1.2" height="121.7" fill="#d4a45c" opacity="0.65"/><rect x="958.4" y="167.7" width="1.2" height="121.7" fill="#7e4218" opacity="0.35"/><rect x="960.6" y="167.7" width="1.2" height="121.7" fill="#a4622c" opacity="0.80"/><rect x="962.8" y="167.7" width="1.0" height="121.7" fill="#8a4a1e" opacity="0.80"/><rect x="964.8" y="167.7" width="0.5" height="121.7" fill="#b67838" opacity="0.35"/><rect x="965.6" y="167.7" width="1.0" height="121.7" fill="#c89250" opacity="0.35"/><rect x="967.2" y="167.7" width="1.2" height="121.7" fill="#7a3f16" opacity="0.35"/><rect x="968.4" y="167.7" width="1.2" height="121.7" fill="#c89250" opacity="0.35"/><rect x="970.2" y="167.7" width="1.2" height="121.7" fill="#7a3f16" opacity="0.35"/></g><!--/grain-->
<rect x="907.200" y="169.100" width="62.800" height="118.900" fill="none" stroke="#6e6258" stroke-width=".6"/>
<rect x="905.800" y="167.700" width="65.600" height="1.600" fill="#8a4a20" opacity=".7"/><rect x="905.800" y="287.800" width="65.600" height="1.600" fill="#8a4a20" opacity=".7"/>
<!-- white table -->
<rect x="964" y="336.800" width="62" height="58" fill="#fffaf2"/>
<!-- counter -->
<rect x="1063.400" y="132.300" width="49" height="262.300" fill="#c3d1c8" stroke="#848c88" stroke-width=".9"/>
<!-- stove -->
<rect x="1062.300" y="196.300" width="50.100" height="48.200" fill="#fcfcfc" stroke="#9a9a9a" stroke-width=".8"/>
<path d="M1108.400 196.300v48.200" stroke="#aaa" stroke-width=".7"/>
<path d="M1060 200.500v39.500" stroke="#555" stroke-width="1.600"/><path d="M1060 203h2.300M1060 237.500h2.300" stroke="#555" stroke-width="1"/>
<g fill="#6b6b6b" stroke="#525252" stroke-width=".9">
<circle cx="1075.800" cy="209.200" r="8"/><circle cx="1095.200" cy="206.700" r="5.600"/><circle cx="1075.800" cy="233.900" r="5.600"/><circle cx="1095.200" cy="231.100" r="8"/>
</g>
<g fill="#565656"><circle cx="1075.800" cy="209.200" r="4.500"/><circle cx="1095.200" cy="206.700" r="3"/><circle cx="1075.800" cy="233.900" r="3"/><circle cx="1095.200" cy="231.100" r="4.500"/></g>
<!-- sink -->
<rect x="1065.500" y="345.200" width="41.300" height="45.100" fill="#fdfdfd" stroke="#a8a8a8" stroke-width=".7"/>
<rect x="1071" y="348.500" width="30" height="38.500" rx="6" fill="url(#gsink)" stroke="#888" stroke-width=".8"/>
<circle cx="1085.500" cy="367.700" r="3.400" fill="#999" stroke="#666" stroke-width=".6"/><circle cx="1085.500" cy="367.700" r="1.600" fill="#3a3a3a"/>
<path d="M1092 356.500l10.500 10.500" stroke="#8a8a8a" stroke-width="3.200" stroke-linecap="round"/><path d="M1092 356.500l10.500 10.500" stroke="#f4f4f4" stroke-width="2" stroke-linecap="round"/><circle cx="1102.800" cy="367.800" r="1.700" fill="#fafafa" stroke="#999" stroke-width=".6"/>
<!-- ===== bath ===== -->
<rect x="1093.400" y="402.200" width="19.400" height="76.300" fill="#fddcb4" stroke="#56504c" stroke-width=".9"/>
<rect x="1062" y="425.500" width="16" height="31.500" fill="#dcbc98" stroke="#6a6058" stroke-width=".8"/>
<ellipse cx="1059.200" cy="441.300" rx="18.400" ry="16.500" fill="#fbdcb6" stroke="#5e5650" stroke-width="1"/>
<ellipse cx="1059.200" cy="441.300" rx="14" ry="12" fill="url(#gbowl)" stroke="#625a52" stroke-width=".9"/>
<rect x="1077.400" y="421.100" width="16" height="40.200" fill="#f6e2cc" stroke="#a09890" stroke-width=".9"/>
<rect x="1079.600" y="423.600" width="12.400" height="35.200" fill="#fdf0e0" stroke="#8c847c" stroke-width=".8"/>
<!-- basin -->
<path d="M984 485.800h37.200c3.300 4.500 5 9.800 5 15.500c0 13.800-10.500 25.300-23.500 25.300s-23.500-11.500-23.500-25.300c0-5.700 1.600-11 4.800-15.500z" fill="#eed6b8" stroke="#a89886" stroke-width=".8"/>
<path d="M985 487.500h35.200c2.800 4 4.300 8.800 4.300 13.800c0 12.800-9.700 23.500-21.800 23.500s-21.800-10.700-21.800-23.500c0-5 1.500-9.800 4.100-13.800z" fill="#d8bc9c" stroke="#8a7a6a" stroke-width=".6"/>
<ellipse cx="1002.700" cy="508.500" rx="19" ry="15.800" fill="#ecd0ae"/>
<circle cx="1002.700" cy="505.100" r="2.600" fill="#5e5248"/>
<rect x="1001.500" y="488.500" width="2.400" height="11.500" fill="#fdfdfd" stroke="#6a6a6a" stroke-width=".4"/>
<path d="M994 491.200h4m-2-2v4M1007.300 491.200h4m-2-2v4" stroke="#444" stroke-width=".7" fill="none"/>
<!-- tub -->
<rect x="1044.500" y="485.400" width="69.100" height="114.600" fill="#fdefdc" stroke="#e0d4c4" stroke-width=".5"/>
<rect x="1044" y="600" width="70.100" height="65" fill="#fddcb4"/>
<ellipse cx="1078.900" cy="543.900" rx="25.500" ry="53.200" fill="#bca288" stroke="#56504a" stroke-width="1"/>
<ellipse cx="1078.900" cy="545.500" rx="20.500" ry="47" fill="#d7ba9b"/>
<rect x="1076.800" y="485.800" width="4.400" height="12.500" fill="#fdfdfd" stroke="#d8d0c8" stroke-width=".4"/>
<circle cx="1078.900" cy="503.400" r="3.200" fill="#6e6258"/>
<path d="M1069.400 488.700h5m-2.500-2.500v5M1083 488.700h5m-2.500-2.500v5" stroke="#444" stroke-width=".8" fill="none"/>
<!-- washer -->
<rect x="968.500" y="611.400" width="52.500" height="51.900" fill="url(#gwhite)" stroke="#909090" stroke-width=".8"/>
<rect x="968.900" y="612.800" width="51.700" height="4.600" fill="#b8b8b8" stroke="#8a8a8a" stroke-width=".5"/>
<rect x="1010.800" y="613.400" width="3.800" height="2" fill="#ddd" stroke="#777" stroke-width=".4"/>
</g>

</g>

<g id="thumbs">
<!-- thumb 1 -->
<rect x="82.300" y="233.200" width="136.600" height="90" fill="#000" opacity=".18" filter="url(#blur1)"/>
<rect x="81.800" y="231.800" width="136.700" height="90.300" fill="#fff" stroke="#d6d6d6" stroke-width=".5"/>
<g filter="url(#blur2)">
<g transform="translate(60,220) scale(.1873)">
<path d="M395 155l25-25h190l30 25v170h-180v-110h-65z" fill="#d9b87c" stroke="#888" stroke-width="5"/>
<path d="M425 130h185" stroke="#111" stroke-width="9"/>
<path d="M395 155l25-25M610 130l30 25" stroke="#333" stroke-width="5"/>
<rect x="368" y="213" width="92" height="118" fill="#9a9a9a" stroke="#777" stroke-width="4"/>
<rect x="400" y="215" width="58" height="22" fill="#c8c8c8"/><rect x="378" y="292" width="28" height="22" fill="#c02020"/><rect x="410" y="292" width="40" height="22" fill="#ddd"/>
<circle cx="412" cy="262" r="10" fill="#bbb"/>
<path d="M280 175h90v125h-50v35h-70v-120z" fill="#c49858" stroke="#777" stroke-width="4"/>
<path d="M280 178h62v14h-62z" fill="#a06a30"/><rect x="333" y="222" width="32" height="20" fill="#6a4a30"/><rect x="300" y="197" width="18" height="16" fill="#7a7a6a"/>
<path d="M130 215h120v120h-90v-35h-30z" fill="#d4a868" stroke="#888" stroke-width="4"/>
<path d="M160 215c-40 10-40 70 0 85z" fill="#c8b090" stroke="#888" stroke-width="3"/>
<circle cx="145" cy="237" r="10" fill="#6a8a4a"/><circle cx="145" cy="275" r="10" fill="#c88860"/>
<rect x="170" y="228" width="48" height="68" fill="#f4e0c8" stroke="#a06a30" stroke-width="3"/><rect x="214" y="240" width="38" height="42" fill="#e88040"/>
<rect x="256" y="225" width="24" height="38" fill="#5a6a5a"/>
<rect x="238" y="284" width="80" height="18" fill="#5a3a20"/><rect x="168" y="314" width="28" height="16" fill="#7a4a28"/><circle cx="210" cy="317" r="12" fill="#5a8a3a"/>
<path d="M320 325h250v195h-60v-130h-190z" fill="#8f5f3f"/>
<circle cx="345" cy="318" r="10" fill="#4a7a3a"/>
<rect x="250" y="355" width="120" height="95" fill="#b4b4b4" stroke="#888" stroke-width="4"/>
<rect x="258" y="335" width="58" height="20" fill="#5a3a20"/>
<ellipse cx="282" cy="394" rx="16" ry="11" fill="#e8a8c0"/><rect x="262" y="364" width="44" height="12" fill="#ddd"/><rect x="336" y="392" width="26" height="28" fill="#e8e8e8"/><circle cx="272" cy="428" r="9" fill="#4a7a3a"/><rect x="290" y="416" width="38" height="16" fill="#ddd"/>
<rect x="375" y="390" width="135" height="52" fill="#d8a868" stroke="#888" stroke-width="3"/>
<rect x="390" y="402" width="100" height="12" fill="#b88848"/><rect x="405" y="420" width="70" height="12" fill="#f0c880"/>
<rect x="367" y="445" width="143" height="80" fill="#b8ac90" stroke="#888" stroke-width="4"/>
<rect x="378" y="452" width="36" height="14" fill="#f0e0a0"/><circle cx="436" cy="462" r="9" fill="#4a7a3a"/><rect x="445" y="470" width="55" height="22" fill="#a8a080"/><rect x="378" y="495" width="40" height="16" fill="#e8e0b0"/><rect x="425" y="498" width="50" height="14" fill="#d8d0a8"/><circle cx="488" cy="508" r="8" fill="#4a7a3a"/><rect x="375" y="480" width="14" height="10" fill="#222"/>
<rect x="570" y="325" width="70" height="195" fill="#c49858" stroke="#888" stroke-width="4"/>
<rect x="578" y="340" width="18" height="50" fill="#5a6a4a"/><rect x="618" y="332" width="18" height="60" fill="#6a3a20"/><rect x="595" y="410" width="22" height="34" fill="#5a3a20"/><circle cx="626" cy="430" r="10" fill="#5a8a3a"/><rect x="572" y="448" width="28" height="22" fill="#6a4020"/><rect x="620" y="478" width="18" height="38" fill="#7a4a20"/><rect x="572" y="496" width="28" height="18" fill="#5a3a20"/><path d="M612 462h24m-12-10v22" stroke="#3a2a1a" stroke-width="4"/>
<circle cx="522" cy="505" r="11" fill="#3a7a3a"/>
<rect x="490" y="150" width="62" height="52" fill="#c8c8c8" stroke="#999" stroke-width="2"/><rect x="490" y="150" width="62" height="10" fill="#8890b0"/><rect x="490" y="200" width="62" height="10" fill="#8890b0"/><path d="M519 172v14" stroke="#222" stroke-width="5"/>
<circle cx="438" cy="158" r="12" fill="#5a8a3a"/><circle cx="388" cy="193" r="11" fill="#3a6a3a"/><circle cx="602" cy="196" r="15" fill="#3a6a2a"/>
<rect x="400" y="160" width="20" height="22" fill="#6a6a7a"/><rect x="412" y="198" width="34" height="14" fill="#c03030"/>
<rect x="562" y="224" width="40" height="18" fill="#9a9aa8"/>
<path d="M552 240c-40 10-40 60 0 70" fill="none" stroke="#a0a0a8" stroke-width="14"/>
<ellipse cx="583" cy="272" rx="15" ry="19" fill="#f0f0f0" stroke="#aaa" stroke-width="2"/><circle cx="583" cy="272" r="5" fill="#888"/>
<rect x="620" y="165" width="16" height="36" fill="#e8d8a0" stroke="#3a2a1a" stroke-width="4"/><rect x="620" y="235" width="16" height="78" fill="#e8d8a0" stroke="#3a2a1a" stroke-width="4"/>
<path d="M460 325h90M575 325h15" stroke="#111" stroke-width="7"/><path d="M320 300v30M160 300h90" stroke="#222" stroke-width="6"/>
<rect x="545" y="515" width="25" height="12" fill="#111"/>
<text x="497" y="101" font-family="Liberation Sans, sans-serif" font-weight="bold" font-size="24" fill="#111" stroke="#111" stroke-width=".8">Flat Plan</text>
<g fill="#333" opacity=".55">
<rect x="680" y="192" width="40" height="10"/><rect x="680" y="229" width="150" height="11"/><rect x="680" y="262" width="68" height="10"/><rect x="680" y="298" width="95" height="10"/><rect x="680" y="330" width="98" height="10"/><rect x="680" y="367" width="64" height="10"/><rect x="680" y="400" width="110" height="10"/><rect x="680" y="436" width="88" height="10"/><rect x="680" y="468" width="72" height="10"/>
</g>
</g>
</g>
<!-- thumb 2 (selected) -->
<rect x="75.500" y="375.500" width="149.300" height="103" fill="#a9c9e3" stroke="#6ea6dc" stroke-width="1"/>
<rect x="82.300" y="383.300" width="136.600" height="90" fill="#000" opacity=".2" filter="url(#blur1)"/>
<rect x="81.800" y="381.900" width="136.800" height="90.100" fill="#fff"/>
<g filter="url(#blur2)"><use href="#plan" transform="translate(81.800,381.900) scale(.1534) translate(-270,-105.800)"/></g>
<g transform="translate(81.800,381.900) scale(.1534) translate(-270,-105.800)" fill="none" stroke="#4e2a12" stroke-width="5.500" stroke-linecap="square" opacity=".9">
<path d="M309 128.500h-10.300v96.500h58M414.400 225h9.600M473 225h67M520.400 128.500h113.600M801 128.500h144.200M1034 128.500h86"/>
<path d="M327.700 227v441h458M872 668h92.300v-70M964.300 548.500v-81.500M964.300 416.800v-12.800"/>
<path d="M540 128.500v384.500M540 591v77M540 475.400h56.500M666 475.400h201.600v-346.900"/>
<rect x="364.200" y="358" width="68.800" height="209.600" fill="#3a3418" stroke="none" opacity=".55"/>
</g>
<rect x="213.700" y="468.100" width="6.400" height="6" fill="#262626"/>
<!-- thumb 3 -->
<rect x="82.300" y="533.200" width="136.600" height="90" fill="#000" opacity=".18" filter="url(#blur1)"/>
<rect x="81.800" y="531.900" width="136.800" height="90.100" fill="#fff" stroke="#d6d6d6" stroke-width=".5"/>
<g filter="url(#blur2)">
<g transform="translate(60,515) scale(.19459)" stroke="#8a8a8a" stroke-width="4">
<rect x="433" y="105" width="182" height="93" fill="#f4ee93"/>
<rect x="218" y="238" width="215" height="237" fill="#fdd0a0"/>
<path d="M433 198h82l10-8h48l10 8h45v120h-195z" fill="#a8d0bc"/>
<path d="M436 205h54v40l-20 17h-34z" fill="#dedeb0" stroke-width="3"/>
<rect x="440" y="207" width="22" height="14" fill="#c8c8a8" stroke-width="2"/><rect x="492" y="205" width="18" height="42" fill="#a8d0bc" stroke-width="3"/>
<rect x="603" y="250" width="22" height="40" fill="#a8d0bc" stroke-width="3"/><path d="M508 296h95v20h-95z" fill="#a8d0bc" stroke-width="3"/><rect x="548" y="296" width="30" height="20" fill="#666" stroke="none"/>
<path d="M436 270c18 0 18 30 0 30" fill="none" stroke-width="3"/>
<rect x="628" y="198" width="105" height="120" fill="#d07a88"/>
<path d="M630 200h100" stroke="#444" stroke-width="7"/>
<rect x="527" y="318" width="148" height="142" fill="#d2d9b2"/>
<rect x="675" y="318" width="58" height="90" fill="#fdd0a0"/>
<rect x="680" y="322" width="46" height="12" fill="#fdd0a0" stroke-width="3"/><rect x="680" y="392" width="46" height="12" fill="#fdd0a0" stroke-width="3"/><rect x="712" y="345" width="18" height="36" fill="#fdd0a0" stroke="#555" stroke-width="3"/>
<rect x="433" y="318" width="94" height="115" fill="#f8c898"/>
<rect x="433" y="318" width="36" height="42" fill="#fdd0a0" stroke-width="3"/><rect x="433" y="362" width="36" height="36" fill="#555" stroke="none"/><rect x="436" y="400" width="30" height="28" fill="#fdd0a0" stroke-width="3"/>
<rect x="500" y="322" width="22" height="36" fill="#c8c8b8" stroke="#444" stroke-width="3"/>
<path d="M524 362v68" stroke="#111" stroke-width="7"/><path d="M470 320h28" stroke="#111" stroke-width="5"/>
<rect x="433" y="433" width="94" height="82" fill="#a0c8b0"/>
<path d="M436 470l44-60l44 60" fill="none" stroke="#c8a070" stroke-width="2"/>
<rect x="527" y="443" width="38" height="42" fill="#909090" stroke="none"/>
<path d="M570 462h100" stroke="#555" stroke-width="7"/><path d="M672 420v40" stroke="#555" stroke-width="6"/>
<rect x="245" y="413" width="163" height="59" fill="none" stroke="#111" stroke-width="5"/>
<path d="M245 472h163" stroke="#111" stroke-width="7"/>
<g stroke="#e8202a" stroke-width="4.500" fill="none">
<path d="M427 325h-224v165h215"/><path d="M527 433h165v40h-127"/><path d="M480 410v123"/>
</g>
<rect x="418" y="490" width="125" height="42" fill="none" stroke="#f0a0a8" stroke-width="2.500"/>
<g fill="#222" stroke="none"><rect x="512" y="150" width="16" height="5"/><rect x="312" y="362" width="18" height="5"/><rect x="533" y="258" width="18" height="5"/><rect x="668" y="264" width="14" height="5"/><rect x="593" y="392" width="16" height="5"/><rect x="484" y="376" width="12" height="5"/><rect x="686" y="362" width="10" height="5"/><rect x="476" y="474" width="10" height="5"/><rect x="462" y="232" width="10" height="4"/></g>
</g>
</g>
</g>

<g id="right">
<rect x="1157" y="105" width="28" height="589" fill="#fff"/>
<rect x="1157.300" y="105" width="1.400" height="589" fill="#b8b8b8"/>
<rect x="1158.700" y="105" width="14.600" height="589" fill="#fafafa"/>
<rect x="1173.300" y="105" width="11.700" height="589" fill="#e8e8e8"/>
<rect x="1173" y="105" width="1" height="589" fill="#d0d0d0"/>
<rect x="1162.300" y="238.300" width="7.600" height="192.500" rx="3.800" fill="#c1c1c1"/>
<path d="M1182 394v11l-6-5.500z" fill="#707070"/>
<path d="M265 394v11l-6-5.500z" fill="#606060"/>
<!-- page bottom edge -->
<rect x="269" y="692.600" width="888.500" height="1.400" fill="#c4c4c4"/>
<!-- rail notch -->
<path d="M45.500 125.500l-7 7.300l7 7.300z" fill="#fafafa" stroke="none"/>
<path d="M44.500 125l-6.500 7.800l6.500 7.800" fill="none" stroke="#c9c9c9" stroke-width="1"/>
<!-- corner --><path d="M0 0h4a4 4 0 0 0-4 4z" fill="#3f5f9a"/><path d="M1185 0h-3.500a3.500 3.500 0 0 1 3.500 3.500z" fill="#8798a8"/>
</g>

</svg>
</body>
</html>
